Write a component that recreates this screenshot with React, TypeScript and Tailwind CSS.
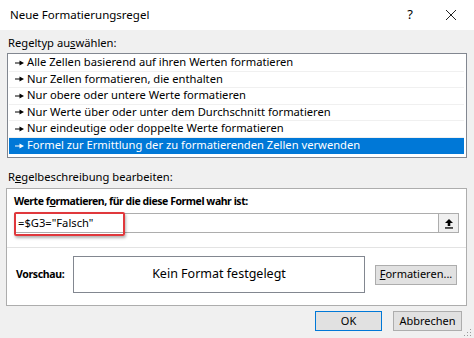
import React from "react";

const rules = [
  "Alle Zellen basierend auf ihren Werten formatieren",
  "Nur Zellen formatieren, die enthalten",
  "Nur obere oder untere Werte formatieren",
  "Nur Werte über oder unter dem Durchschnitt formatieren",
  "Nur eindeutige oder doppelte Werte formatieren",
  "Formel zur Ermittlung der zu formatierenden Zellen verwenden",
];

function RuleArrow({ color }: { color: string }) {
  return (
    <svg width="9" height="6" viewBox="0 0 9 6" className="shrink-0">
      <rect x="0" y="2.5" width="5" height="1" fill={color} />
      <polygon points="4.5,0.5 9,3 4.5,5.5" fill={color} />
    </svg>
  );
}

export default function App() {
  return (
    <div className="w-[474px] h-[338px] bg-[#f0f0f0] text-[11.2px] text-black font-['Noto_Sans',sans-serif] relative overflow-hidden">
      {/* Title bar */}
      <div className="w-[474px] h-[30px] bg-white flex items-center pl-[10px] text-[11.5px]">
        <span className="flex-1">Neue Formatierungsregel</span>
        <div className="w-[30px] h-[30px] flex items-center justify-center text-[13px] shrink-0">?</div>
        <div className="w-[3px] shrink-0" />
        <div className="w-[46px] h-[30px] flex items-center justify-center shrink-0">
          <svg width="12" height="12" viewBox="0 0 12 12">
            <path d="M1 1 L11 11 M11 1 L1 11" stroke="#222" strokeWidth="1" />
          </svg>
        </div>
      </div>

      <div className="px-[7px]">
        <div className="h-[23px] flex items-end pb-[1px] pl-[1px]">
          Regeltyp au<span className="underline">s</span>wählen:
        </div>

        {/* Rule list */}
        <div className="w-[460px] h-[105px] border border-[#828790] bg-white pt-[1px] px-[1px]">
          {rules.map((r, i) => {
            const sel = i === rules.length - 1;
            return (
              <div
                key={r}
                className={
                  sel
                    ? "h-[16.5px] mr-[1px] bg-[#0078d7] text-white flex items-center gap-[2px] pl-[6px]"
                    : "h-[16.5px] mr-[1px] border-b border-[#f0f0f0] flex items-center gap-[2px] pl-[6px]"
                }
              >
                <RuleArrow color={sel ? "#fff" : "#000"} />
                <span className="ml-[1px]">{r}</span>
              </div>
            );
          })}
        </div>

        <div className="h-[30px] flex items-end pb-[2px] pl-[1px]">
          R<span className="underline">e</span>gelbeschreibung bearbeiten:
        </div>

        {/* Description panel */}
        <div className="w-[461px] -ml-[1px] h-[118px] border border-[#adadad] bg-white flex flex-col">
          <div className="px-[7px] pt-[5px] font-bold h-[24px] text-[10.5px] tracking-[-0.45px]">
            Werte f<span className="underline">o</span>rmatieren, für die diese Formel wahr ist:
          </div>
          <div className="mx-[7px] h-[20px] border border-[#adadad] flex items-center relative">
            <span className="pl-[3px] flex-1">=$G3="Falsch"</span>
            <div className="w-[20px] h-[18px] border-l border-[#adadad] bg-[#f0f0f0] flex items-center justify-center">
              <svg width="10" height="11" viewBox="0 0 10 11">
                <path d="M5 1 L9 5 L6.3 5 L6.3 8 L3.7 8 L3.7 5 L1 5 Z" fill="#000" />
                <rect x="1" y="9.3" width="8" height="1.3" fill="#000" />
              </svg>
            </div>
            <div className="absolute -left-[1px] -top-[2px] w-[111px] h-[24px] border-2 border-[#e0383c] rounded-[2px] shadow-[1px_2px_3px_rgba(0,0,0,0.3)]" />
          </div>
          <div className="mt-[14px] border-t border-[#e3e3e3]" />
          <div className="flex items-center flex-1 pl-[9px] pb-[4px]">
            <span className="font-bold w-[57px] text-[10.5px] tracking-[-0.35px]">Vorschau:</span>
            <div className="w-[292px] h-[37px] border border-[#828790] flex items-center justify-center text-[12.5px]">
              Kein Format festgelegt
            </div>
            <button className="ml-[10px] w-[82px] h-[20px] bg-[#e1e1e1] border border-[#adadad] text-[11px]">
              <span className="underline">F</span>ormatieren...
            </button>
          </div>
        </div>

        {/* Footer */}
        <div className="flex justify-end gap-[11px] pt-[5px] pr-[5px]">
          <button className="w-[67px] h-[20px] bg-[#e1e1e1] border border-[#0078d7] text-[11px]">OK</button>
          <button className="w-[69px] h-[20px] bg-[#e1e1e1] border border-[#adadad] text-[11px]">Abbrechen</button>
        </div>
      </div>

      {/* resize grip */}
      <svg width="8" height="8" viewBox="0 0 8 8" className="absolute right-[2px] bottom-[1px]">
        <rect x="6" y="0" width="1" height="1" fill="#9a9a9a" />
        <rect x="3" y="3" width="1" height="1" fill="#9a9a9a" />
        <rect x="6" y="3" width="1" height="1" fill="#9a9a9a" />
        <rect x="0" y="6" width="1" height="1" fill="#9a9a9a" />
        <rect x="3" y="6" width="1" height="1" fill="#9a9a9a" />
        <rect x="6" y="6" width="1" height="1" fill="#9a9a9a" />
      </svg>
    </div>
  );
}
